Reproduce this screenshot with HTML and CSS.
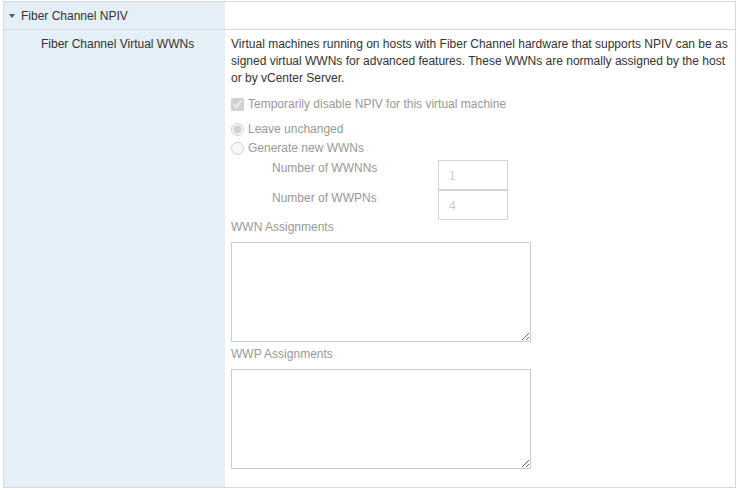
FILE: index.html
```html
<!DOCTYPE html>
<html lang="en">
<head>
    <meta charset="UTF-8">
    <link rel="stylesheet" href="styles.css">
</head>
<body>
<div class="panel">
    <!-- section header -->
    <div class="row head">
        <div class="label"><span class="caret"></span>Fiber Channel NPIV</div>
        <div class="value"></div>
    </div>

    <!-- WWN settings -->
    <div class="row">
        <div class="label sub">Fiber Channel Virtual WWNs</div>
        <div class="value">
            <p class="desc">Virtual machines running on hosts with Fiber Channel hardware that supports NPIV can be as signed virtual WWNs for advanced features. These WWNs are normally assigned by the host or by vCenter Server.</p>

            <label class="check"><input type="checkbox" checked disabled>Temporarily disable NPIV for this virtual machine</label>

            <div class="radios">
                <label class="radio"><input type="radio" name="wwn" checked disabled>Leave unchanged</label>
                <label class="radio"><input type="radio" name="wwn" disabled>Generate new WWNs</label>
            </div>

            <div class="counts">
                <div class="count">
                    <span>Number of WWNNs</span>
                    <input type="text" value="1" disabled>
                </div>
                <div class="count">
                    <span>Number of WWPNs</span>
                    <input type="text" value="4" disabled>
                </div>
            </div>

            <div class="field">
                <div class="field-title">WWN Assignments</div>
                <textarea></textarea>
            </div>
            <div class="field">
                <div class="field-title">WWP Assignments</div>
                <textarea></textarea>
            </div>
        </div>
    </div>
</div>
</body>
</html>
```
FILE: styles.css
```css
* {
    margin: 0;
    padding: 0;
    box-sizing: border-box;
}

body {
    background: #fff;
    font-family: "Liberation Sans", Arial, sans-serif;
    font-size: 12px;
    color: #333;
    padding: 1px 2px 0 3px;
}

.panel {
    width: 733px;
    border: 1px solid #d9d9d9;
}

.row {
    display: grid;
    grid-template-columns: 221px 1fr;
}

.row.head {
    height: 28px;
    border-bottom: 1px solid #d9d9d9;
}

.label {
    background: #e4eff7;
}

.head .label {
    display: flex;
    align-items: center;
    padding-left: 5px;
    padding-top: 1px;
}

.caret {
    display: inline-block;
    width: 0;
    height: 0;
    border-left: 3px solid transparent;
    border-right: 3px solid transparent;
    border-top: 4px solid #555;
    margin: 0 6px 0 0;
}

.label.sub {
    padding: 6px 0 0 37px;
    line-height: 17px;
}

.value {
    padding: 6px 6px 18px 6px;
}

.head .value {
    padding: 0;
}

.desc {
    line-height: 17px;
}

.check,
.radio {
    display: flex;
    align-items: center;
    color: #999;
    line-height: 19px;
}

.check {
    margin-top: 8px;
}

.check input,
.radio input {
    width: 13px;
    height: 13px;
    margin: 0 4px 0 0;
}

.radios {
    margin-top: 6px;
}

.counts {
    margin-top: 2px;
    padding-left: 41px;
}

.count {
    display: flex;
    color: #999;
}

.count span {
    width: 166px;
    line-height: 14px;
    padding-top: 1px;
}

.count input {
    width: 70px;
    height: 30px;
    border: 1px solid #d4d4d4;
    background: #fff;
    color: #ccc;
    font-family: inherit;
    font-size: 12px;
    padding: 2px 0 0 10px;
}

.field-title {
    color: #999;
    line-height: 14px;
    margin: 0 0 8px;
}

.field + .field .field-title {
    margin-top: 5px;
}

.field textarea {
    display: block;
    width: 300px;
    height: 100px;
    border: 1px solid #ccc;
    resize: both;
    font-family: inherit;
}
```
